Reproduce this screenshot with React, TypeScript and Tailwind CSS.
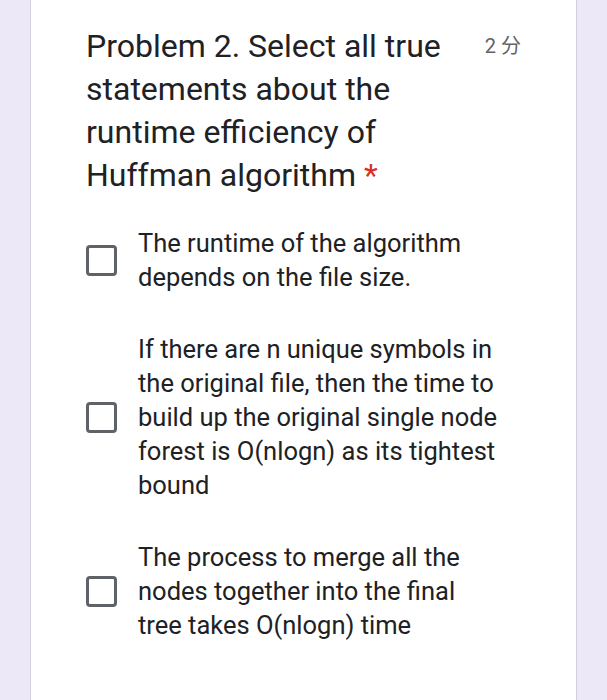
import React from "react";

const options = [
  "The runtime of the algorithm depends on the file size.",
  "If there are n unique symbols in the original file, then the time to build up the original single node forest is O(nlogn) as its tightest bound",
  "The process to merge all the nodes together into the final tree takes O(nlogn) time",
];

const Checkbox: React.FC = () => (
  <div className="w-[31px] h-[31px] shrink-0 rounded-[4px] border-[3px] border-[#5f6368]" />
);

export default function App() {
  return (
    <div
      className="min-h-[700px] bg-[#ece8f7] px-[30px]"
      style={{ fontFamily: "Roboto, 'Noto Sans CJK SC', sans-serif" }}
    >
      <div className="min-h-[700px] bg-white border-x border-[#d3d0db] pl-[55px] pr-[55px] pt-[25px]">
        <div className="flex items-start">
          <div className="w-[375px] text-[32px] leading-[43px] text-[#202124]">
            Problem 2. Select all true statements about the runtime efficiency
            of Huffman algorithm <span className="text-[#d93025]">*</span>
          </div>
          <div className="ml-auto mt-[9px] text-[20px] leading-[24px] text-[#5f6368]">
            2 分
          </div>
        </div>

        <div className="mt-[29px] flex flex-col gap-[38px]">
          {options.map((text, i) => (
            <div key={i} className="flex items-center gap-[21px]">
              <Checkbox />
              <div className="w-[366px] text-[25.5px] leading-[34px] text-[#202124]">
                {text}
              </div>
            </div>
          ))}
        </div>
      </div>
    </div>
  );
}
